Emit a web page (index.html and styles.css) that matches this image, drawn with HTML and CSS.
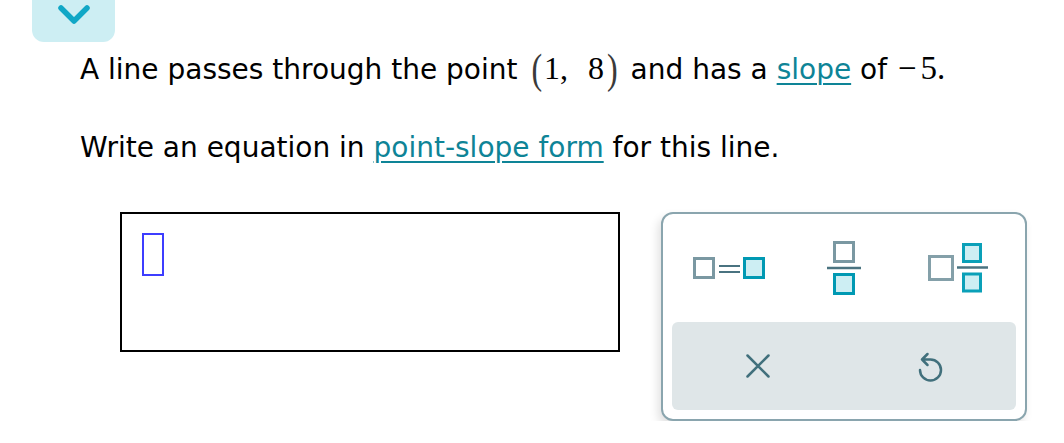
FILE: index.html
```html
<!DOCTYPE html>
<html lang="en">
<head>
<meta charset="utf-8">
<title>Point-slope form</title>
<link rel="stylesheet" href="styles.css">
</head>
<body>
<div class="tab">
  <svg class="chevron" width="83" height="42" viewBox="0 0 83 42"><path d="M29 8 L42 21 L55 8" fill="none" stroke="#10a7c6" stroke-width="5.5" stroke-linecap="round" stroke-linejoin="round"/></svg>
</div>
<main class="content">
  <p class="q q1">A line passes through the point <span class="math point"><span class="paren open">(</span>1<span class="comma">,</span><span class="n8">8</span><span class="paren close">)</span></span> and has a <a class="link" href="#">slope</a> of <span class="math neg"><span class="minus">−</span>5.</span></p>
  <p class="q q2">Write an equation in <a class="link" href="#">point-slope form</a> for this line.</p>
  <div class="work">
    <div class="answer"><span class="caret"></span></div>
    <div class="keypad">
      <div class="icons">
        <button class="key key-eq" type="button" aria-label="equals">
          <svg width="72" height="22" viewBox="0 0 72 22">
            <rect x="1.5" y="1.5" width="19" height="19" fill="#fff" stroke="#7a98a2" stroke-width="3"/>
            <line x1="26" y1="9" x2="47" y2="9" stroke="#4a7380" stroke-width="2"/>
            <line x1="26" y1="15" x2="47" y2="15" stroke="#4a7380" stroke-width="2"/>
            <rect x="51.5" y="1.5" width="19" height="19" fill="#cdeef3" stroke="#0099b3" stroke-width="3"/>
          </svg>
        </button>
        <button class="key" type="button" aria-label="fraction">
          <svg width="34" height="54" viewBox="0 0 34 54">
            <rect x="7.5" y="1.5" width="19" height="19" fill="#fff" stroke="#7a98a2" stroke-width="3"/>
            <line x1="0" y1="27" x2="34" y2="27" stroke="#4a7380" stroke-width="2.5"/>
            <rect x="7.5" y="33.5" width="19" height="19" fill="#cdeef3" stroke="#0099b3" stroke-width="3"/>
          </svg>
        </button>
        <button class="key" type="button" aria-label="mixed number">
          <svg width="61" height="52" viewBox="0 0 61 52">
            <rect x="1.5" y="14.5" width="23" height="23" fill="#fff" stroke="#84a0a9" stroke-width="3"/>
            <rect x="35.5" y="2.5" width="17" height="17" fill="#cdeef3" stroke="#0aa0b8" stroke-width="3"/>
            <line x1="29" y1="25.5" x2="60" y2="25.5" stroke="#4a7380" stroke-width="2.5"/>
            <rect x="35.5" y="32" width="17" height="17" fill="#cdeef3" stroke="#0aa0b8" stroke-width="3"/>
          </svg>
        </button>
      </div>
      <div class="actions">
        <button class="key" type="button" aria-label="clear">
          <svg width="24" height="24" viewBox="0 0 24 24"><path d="M1.5 1.5 L22.5 22.5 M22.5 1.5 L1.5 22.5" fill="none" stroke="#41707c" stroke-width="2.5" stroke-linecap="round"/></svg>
        </button>
        <button class="key" type="button" aria-label="undo">
          <svg width="28" height="34" viewBox="0 0 28 34"><path d="M14.5 10.5 A10.5 10.5 0 1 1 4 21 M14.5 10.5 H6 M11.5 5 L6 10.5 L11.5 16" fill="none" stroke="#41707c" stroke-width="2.5" stroke-linecap="round" stroke-linejoin="round"/></svg>
        </button>
      </div>
    </div>
  </div>
</main>
</body>
</html>
```
FILE: styles.css
```css
body {
  margin: 0;
  background: #fff;
  color: #000;
  font-family: "DejaVu Sans", Verdana, sans-serif;
}

.tab {
  margin-left: 32px;
  width: 83px;
  height: 42px;
  background: #cdeef3;
  border-radius: 0 0 12px 12px;
}

.chevron {
  display: block;
}

.content {
  padding-left: 80px;
}

.q {
  margin: 0;
  font-size: 28px;
  line-height: 40px;
  white-space: nowrap;
}

.q1 {
  margin-top: 6px;
}

.q2 {
  margin-top: 38px;
}

.link {
  color: #0e8497;
  text-decoration: underline;
  text-decoration-thickness: 2px;
  text-underline-offset: 4px;
}

.math {
  font-family: "Liberation Serif", "Times New Roman", serif;
  font-size: 32px;
  line-height: 40px;
}

.point {
  margin-left: 5px;
  margin-right: 4px;
}

.paren {
  display: inline-block;
  transform: scaleY(1.32);
  color: #3a3a3a;
}

.open {
  margin-right: 2px;
}

.close {
  margin-left: 3px;
}

.n8 {
  margin-left: 20px;
}

.neg {
  margin-left: 2px;
  font-size: 33px;
}

.minus {
  margin-right: 4px;
}

.work {
  display: flex;
  align-items: flex-start;
  margin-top: 44px;
}

.answer {
  box-sizing: border-box;
  width: 500px;
  height: 140px;
  margin-left: 40px;
  border: 2px solid #000;
  padding: 19px 0 0 20px;
}

.caret {
  display: block;
  box-sizing: border-box;
  width: 22px;
  height: 43px;
  border: 2px solid #3d3dff;
}

.keypad {
  box-sizing: border-box;
  width: 366px;
  height: 209px;
  margin-left: 41px;
  border: 2px solid #8aa5ae;
  border-radius: 12px;
  padding: 0 9px 9px;
  display: flex;
  flex-direction: column;
  box-shadow: -3px 5px 10px rgba(0, 0, 0, 0.12);
  background: #fff;
}

.icons {
  height: 108px;
  display: grid;
  grid-template-columns: repeat(3, 1fr);
  align-items: center;
  justify-items: center;
}

.key-eq {
  margin-right: 6px;
}

.actions {
  flex: 1;
  background: #dfe6e8;
  border-radius: 6px;
  display: grid;
  grid-template-columns: 1fr 1fr;
  align-items: center;
  justify-items: center;
}

.key {
  border: 0;
  padding: 0;
  margin: 0;
  background: transparent;
  display: flex;
  align-items: center;
  justify-content: center;
}

.key svg {
  display: block;
}
```
